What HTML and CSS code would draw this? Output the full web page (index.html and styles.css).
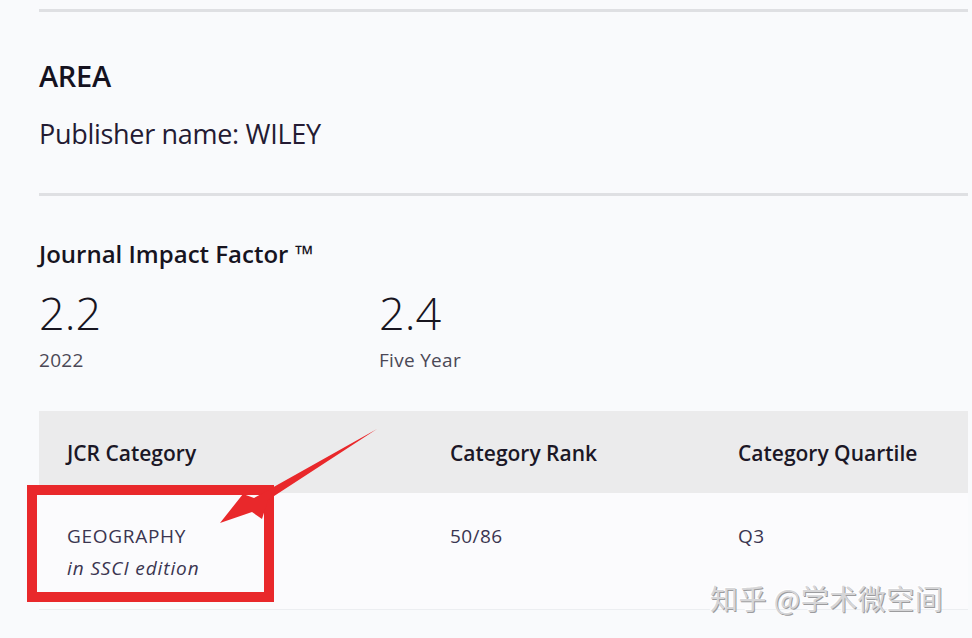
FILE: index.html
```html
<!DOCTYPE html>
<html lang="en">
<head>
<meta charset="utf-8">
<title>JCR</title>
<link rel="stylesheet" href="styles.css">
</head>
<body>
<main class="page">
  <section class="block publisher">
    <h1 class="area">AREA</h1>
    <p class="pub">Publisher name: WILEY</p>
  </section>
  <section class="block jif">
    <h2 class="jif-title">Journal Impact Factor ™</h2>
    <div class="jif-values">
      <div class="jif-item">
        <div class="jif-num">2.2</div>
        <div class="jif-label">2022</div>
      </div>
      <div class="jif-item">
        <div class="jif-num">2.4</div>
        <div class="jif-label">Five Year</div>
      </div>
    </div>
    <div class="table">
      <div class="thead">
        <div class="cell">JCR Category</div>
        <div class="cell">Category Rank</div>
        <div class="cell">Category Quartile</div>
      </div>
      <div class="trow">
        <div class="cell">
          <div class="cat">GEOGRAPHY</div>
          <div class="edition">in SSCI edition</div>
        </div>
        <div class="cell">50/86</div>
        <div class="cell">Q3</div>
      </div>
    </div>
  </section>
  <svg class="annot" width="972" height="638" viewBox="0 0 972 638" aria-hidden="true">
    <rect x="32" y="490" width="237" height="107" fill="none" stroke="#e9282b" stroke-width="10"/>
    <polygon points="377,429 268,500 262,519 252,512 220,523 243,494 254,498" fill="#e9282b"/>
  </svg>
  <div class="watermark">知乎 @学术微空间</div>
</main>
</body>
</html>
```
FILE: styles.css
```css
html, body {
  margin: 0;
  padding: 0;
  background: #f9fafc;
}
body {
  font-family: "Open Sans", "Noto Sans", "Noto Sans CJK SC", sans-serif;
  color: #1d1a2c;
}
.page {
  position: relative;
  width: 972px;
  height: 638px;
  overflow: hidden;
  padding: 9px 4px 0 39px;
  box-sizing: border-box;
}
.block {
  border-top: 3px solid #dfe0e3;
}
.publisher {
  height: 184px;
  box-sizing: border-box;
  padding-top: 46px;
}
.area {
  margin: 0;
  font-size: 29px;
  font-weight: 600;
  line-height: 36px;
  letter-spacing: -0.3px;
  color: #15121f;
}
.pub {
  margin: 23px 0 0;
  font-size: 27px;
  font-weight: 400;
  line-height: 34px;
  letter-spacing: -0.3px;
  color: #241b33;
}
.jif {
  padding-top: 42px;
}
.jif-title {
  margin: 0;
  font-size: 24px;
  font-weight: 600;
  line-height: 32px;
  color: #17141f;
}
.jif-values {
  display: flex;
  margin-top: 16px;
}
.jif-item {
  width: 340px;
}
.jif-num {
  font-size: 45px;
  font-weight: 300;
  line-height: 54px;
  color: #18151f;
}
.jif-label {
  margin-top: 7px;
  font-size: 19px;
  line-height: 26px;
  color: #4b4856;
  letter-spacing: 0.3px;
}
.table {
  margin-top: 38px;
}
.thead, .trow {
  display: grid;
  grid-template-columns: 383px 288px 1fr;
}
.thead {
  background: #ebebec;
  height: 82px;
  align-items: center;
}
.thead .cell {
  padding-left: 28px;
  font-size: 21px;
  font-weight: 600;
  color: #1b1726;
  padding-top: 2px;
}
.trow {
  height: 117px;
  box-sizing: border-box;
  border-bottom: 1px solid #eceef1;
  background: #fbfbfd;
  padding-top: 27px;
}
.trow .cell {
  padding-left: 28px;
  font-size: 19px;
  line-height: 32px;
  color: #3a3550;
  letter-spacing: 0.4px;
}
.cat {
  letter-spacing: 0.7px;
}
.edition {
  font-style: italic;
  letter-spacing: 0.9px;
}
.annot {
  position: absolute;
  left: 0;
  top: 0;
  pointer-events: none;
}
.watermark {
  position: absolute;
  left: 710px;
  top: 580px;
  font-family: "Noto Sans CJK SC", sans-serif;
  font-size: 28px;
  line-height: 36px;
  color: #d6d6d8;
  letter-spacing: 0.5px;
  text-shadow: 1px 1px 0 #9c9c9e, -1px -1px 0 #ffffff;
}
```
